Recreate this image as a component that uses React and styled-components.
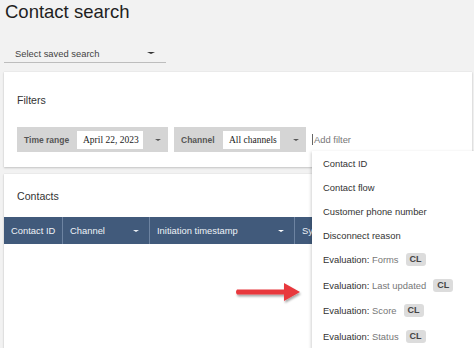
import React from "react";
import styled, { createGlobalStyle } from "styled-components";

const GlobalStyle = createGlobalStyle`
  html, body {
    margin: 0;
    padding: 0;
    background: #f2f2f2;
    overflow: hidden;
  }
  body {
    font-family: "Liberation Sans", Arial, sans-serif;
  }
`;

const Page = styled.div`
  position: relative;
  width: 474px;
  height: 348px;
  padding: 0 2px 0 4px;
  box-sizing: border-box;
  overflow: hidden;
`;

const Title = styled.h1`
  margin: 0 0 0 1px;
  padding-top: 1px;
  font-size: 18.5px;
  line-height: 22px;
  font-weight: 400;
  color: #1f1f1f;
`;

const SavedSelect = styled.div`
  margin-top: 21px;
  width: 162px;
  height: 19px;
  box-sizing: border-box;
  border-bottom: 1px solid #bdbdbd;
  display: flex;
  align-items: center;
  justify-content: space-between;
  padding: 0 11px 0 11px;
  font-size: 9.4px;
  color: #444;
`;

const Caret = styled.span`
  width: 0;
  height: 0;
  flex-shrink: 0;
  border-left: ${({ $size }) => $size}px solid transparent;
  border-right: ${({ $size }) => $size}px solid transparent;
  border-top: ${({ $size }) => $size * 0.7}px solid ${({ $color }) => $color};
`;

const Card = styled.div`
  background: #fff;
  box-shadow: 0 1px 2px rgba(0, 0, 0, 0.18), 0 0 1px rgba(0, 0, 0, 0.12);
  padding: 0 13px;
`;

const FiltersCard = styled(Card)`
  margin-top: 9px;
  height: 95px;
  padding-top: 21px;
  box-sizing: border-box;
`;

const CardTitle = styled.div`
  font-size: 10.6px;
  line-height: 14px;
  color: #333;
`;

const FilterRow = styled.div`
  margin-top: 20px;
  display: flex;
  align-items: center;
  gap: 6px;
`;

const Chip = styled.div`
  display: flex;
  align-items: center;
  height: 25px;
  width: ${({ $w }) => $w}px;
  background: #d5d5d5;
  padding: 0 7px 0 7px;
  box-sizing: border-box;
`;

const ChipLabel = styled.span`
  font-size: 8.5px;
  font-weight: 700;
  color: #555;
  width: ${({ $w }) => $w}px;
`;

const ChipValue = styled.span`
  background: #fff;
  height: 18px;
  width: ${({ $w }) => $w}px;
  box-sizing: border-box;
  padding-left: 6px;
  display: flex;
  align-items: center;
  font-family: "Liberation Serif", "Times New Roman", serif;
  font-size: 9.5px;
  color: #222;
  margin-right: auto;
`;

const AddFilter = styled.div`
  border-left: 1px solid #666;
  padding-left: 1px;
  height: 11px;
  line-height: 11px;
  font-size: 9.4px;
  color: #777;
`;

const ContactsCard = styled(Card)`
  margin-top: 7px;
  height: 200px;
  padding: 15px 0 0;
  box-sizing: border-box;
`;

const ContactsTitle = styled(CardTitle)`
  padding-left: 13px;
`;

const TableHead = styled.div`
  margin-top: 14px;
  display: flex;
  height: 27px;
  background: #415a7b;
`;

const HeadCell = styled.div`
  width: ${({ $w }) => $w}px;
  flex-shrink: 0;
  box-sizing: border-box;
  display: flex;
  align-items: center;
  justify-content: space-between;
  padding: 0 10px 0 7px;
  border-right: 1px solid #6d83a1;
  font-size: 9.4px;
  color: #eef2f7;
  white-space: nowrap;
  overflow: hidden;
`;

const EdgeCell = styled(HeadCell)`
  padding: 0 0 0 7px;
  border-right: none;
  justify-content: flex-start;
`;

const Menu = styled.div`
  position: absolute;
  left: 312px;
  top: 151px;
  width: 170px;
  background: #fff;
  box-shadow: -1px 1px 3px rgba(0, 0, 0, 0.18);
`;

const MenuItem = styled.div`
  height: ${({ $tall }) => ($tall ? 25.5 : 24)}px;
  display: flex;
  align-items: center;
  gap: 7px;
  padding-left: 11px;
  font-size: 9.4px;
  color: #333;
  white-space: nowrap;
`;

const Muted = styled.span`
  color: #777;
`;

const Badge = styled.span`
  background: #dcdcdc;
  border-radius: 3px;
  padding: 1px 4px;
  font-size: 9px;
  font-weight: 700;
  color: #444;
  line-height: 11px;
`;

const Arrow = styled.svg`
  position: absolute;
  left: 232px;
  top: 279px;
`;

const evaluations = ["Forms", "Last updated", "Score", "Status"];

export default function App() {
  return (
    <>
      <GlobalStyle />
      <Page>
        <Title>Contact search</Title>
        <SavedSelect>
          Select saved search
          <Caret $size={4} $color="#333" />
        </SavedSelect>

        <FiltersCard>
          <CardTitle>Filters</CardTitle>
          <FilterRow>
            <Chip $w={151}>
              <ChipLabel $w={53}>Time range</ChipLabel>
              <ChipValue $w={66}>April 22, 2023</ChipValue>
              <Caret $size={3} $color="#555" />
            </Chip>
            <Chip $w={132}>
              <ChipLabel $w={42}>Channel</ChipLabel>
              <ChipValue $w={57}>All channels</ChipValue>
              <Caret $size={3} $color="#555" />
            </Chip>
            <AddFilter>Add filter</AddFilter>
          </FilterRow>
        </FiltersCard>

        <ContactsCard>
          <ContactsTitle>Contacts</ContactsTitle>
          <TableHead>
            <HeadCell $w={59}>Contact ID</HeadCell>
            <HeadCell $w={87}>
              Channel
              <Caret $size={3.5} $color="#e8edf3" />
            </HeadCell>
            <HeadCell $w={145}>
              Initiation timestamp
              <Caret $size={3.5} $color="#fff" />
            </HeadCell>
            <EdgeCell $w={17}>Sy</EdgeCell>
          </TableHead>
        </ContactsCard>

        <Menu>
          <MenuItem>Contact ID</MenuItem>
          <MenuItem>Contact flow</MenuItem>
          <MenuItem>Customer phone number</MenuItem>
          <MenuItem>Disconnect reason</MenuItem>
          {evaluations.map((name) => (
            <MenuItem key={name} $tall>
              <span>
                Evaluation: <Muted>{name}</Muted>
              </span>
              <Badge>CL</Badge>
            </MenuItem>
          ))}
        </Menu>

        <Arrow width="72" height="26" viewBox="0 0 72 26">
          <defs>
            <filter id="sh" x="-20%" y="-40%" width="140%" height="180%">
              <feDropShadow dx="1" dy="2" stdDeviation="1.2" floodColor="#000" floodOpacity="0.35" />
            </filter>
          </defs>
          <path
            d="M5 10.5 L52 10.5 L52 4 L68 13 L52 22 L52 15.5 L5 15.5 Q3 13 5 10.5 Z"
            fill="#e8383d"
            filter="url(#sh)"
          />
        </Arrow>
      </Page>
    </>
  );
}
